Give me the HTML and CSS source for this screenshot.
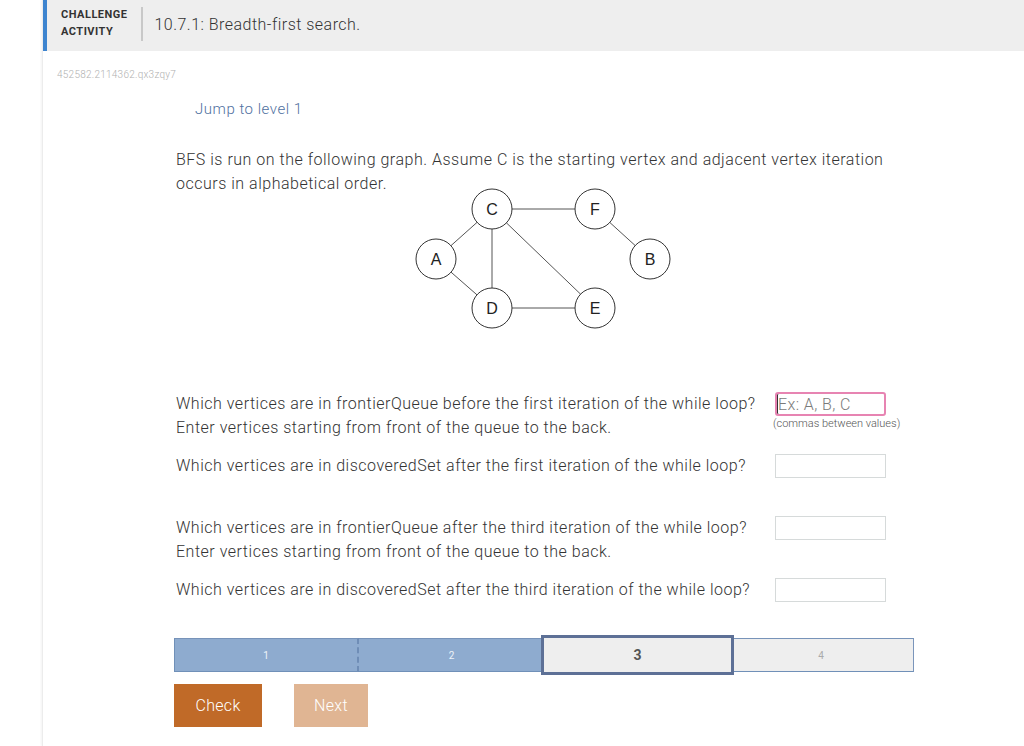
FILE: index.html
```html
<!DOCTYPE html>
<html>
<head>
<meta charset="utf-8">
<link rel="stylesheet" href="styles.css">
</head>
<body>
<div class="page">
  <div class="header">
    <div class="label">Challenge<br>Activity</div>
    <div class="divider"></div>
    <div class="title">10.7.1: Breadth-first search.</div>
  </div>
  <div class="id">452582.2114362.qx3zqy7</div>
  <div class="jump">Jump to level 1</div>
  <div class="content">
    <p class="prompt">BFS is run on the following graph. Assume C is the starting vertex and adjacent vertex iteration occurs in alphabetical order.</p>
    <svg class="graph" width="262" height="144" viewBox="0 0 262 144">
      <g stroke="#555" stroke-width="1">
        <line x1="82" y1="22" x2="185" y2="22"/>
        <line x1="82" y1="22" x2="26" y2="72"/>
        <line x1="82" y1="22" x2="82" y2="121"/>
        <line x1="82" y1="22" x2="185" y2="121"/>
        <line x1="26" y1="72" x2="82" y2="121"/>
        <line x1="185" y1="22" x2="240" y2="72"/>
        <line x1="82" y1="121" x2="185" y2="121"/>
      </g>
      <g fill="#fff" stroke="#333" stroke-width="1">
        <circle cx="82" cy="22" r="20"/>
        <circle cx="185" cy="22" r="20"/>
        <circle cx="26" cy="72" r="20"/>
        <circle cx="240" cy="72" r="20"/>
        <circle cx="82" cy="121" r="20"/>
        <circle cx="185" cy="121" r="20"/>
      </g>
      <g class="nodelabel" text-anchor="middle">
        <text x="82" y="28">C</text>
        <text x="185" y="28">F</text>
        <text x="26" y="78">A</text>
        <text x="240" y="78">B</text>
        <text x="82" y="127">D</text>
        <text x="185" y="127">E</text>
      </g>
    </svg>

    <div class="qrow q1">
      <div class="qtext">Which vertices are in frontierQueue before the first iteration of the while loop?<br>Enter vertices starting from front of the queue to the back.</div>
      <div class="qinput">
        <input class="field focused" type="text" placeholder="Ex: A, B, C">
        <div class="hint">(commas between values)</div>
      </div>
    </div>
    <div class="qrow q2">
      <div class="qtext">Which vertices are in discoveredSet after the first iteration of the while loop?</div>
      <div class="qinput"><input class="field" type="text"></div>
    </div>
    <div class="qrow q3">
      <div class="qtext">Which vertices are in frontierQueue after the third iteration of the while loop?<br>Enter vertices starting from front of the queue to the back.</div>
      <div class="qinput"><input class="field" type="text"></div>
    </div>
    <div class="qrow q4">
      <div class="qtext">Which vertices are in discoveredSet after the third iteration of the while loop?</div>
      <div class="qinput"><input class="field" type="text"></div>
    </div>

    <div class="progress">
      <div class="seg done first">1</div>
      <div class="seg done">2</div>
      <div class="seg current">3</div>
      <div class="seg todo">4</div>
    </div>

    <div class="buttons">
      <button class="btn check">Check</button>
      <button class="btn next">Next</button>
    </div>
  </div>
</div>
</body>
</html>
```

FILE: styles.css
```css
html, body {
  margin: 0;
  padding: 0;
  background: #fff;
}
body {
  font-family: Roboto, "Liberation Sans", sans-serif;
  font-weight: 300;
  letter-spacing: 0.032em;
  color: #333;
}
.page {
  margin-left: 42px;
  min-height: 746px;
  border-left: 1px solid #ececec;
  box-shadow: -1px 0 2px rgba(0,0,0,0.05);
}
.header {
  height: 51px;
  background: #eeeeee;
  border-left: 4px solid #3d84cf;
  display: flex;
  align-items: center;
}
.label {
  margin-left: 14px;
  margin-top: -5px;
  font-size: 11px;
  font-weight: 700;
  letter-spacing: 0.5px;
  line-height: 17px;
  text-transform: uppercase;
  color: #333;
}
.divider {
  width: 2px;
  height: 34px;
  background: #c8c8c8;
  margin-left: 13px;
  margin-top: -3px;
}
.title {
  margin-left: 12px;
  margin-top: -3px;
  font-size: 16px;
  font-weight: 300;
  letter-spacing: 0.03em;
  color: #333;
}
.id {
  margin: 18px 0 0 14px;
  font-size: 10px;
  line-height: 12px;
  letter-spacing: 0.025em;
  color: #b0b0b0;
}
.jump {
  margin: 18px 0 0 152px;
  font-size: 15px;
  font-weight: 300;
  letter-spacing: 0.035em;
  line-height: 20px;
  color: #4f70a0;
}
.content {
  margin-left: 131px;
  width: 740px;
}
.prompt {
  margin: 29px 0 0 2px;
  font-size: 16px;
  line-height: 24px;
  width: 720px;
}
.graph {
  display: block;
  margin: -9px 0 0 236px;
}
.nodelabel {
  font-family: "Liberation Sans", Arial, sans-serif;
  font-size: 16px;
  font-weight: 400;
  letter-spacing: 0;
  fill: #222;
}
.qrow {
  display: flex;
  font-size: 16px;
  line-height: 24px;
}
.q1 { margin-top: 61px; }
.q2 { margin-top: 14px; }
.q3 { margin-top: 38px; }
.q4 { margin-top: 14px; }
.qtext {
  width: 599px;
  padding-left: 2px;
}
.qinput {
  width: 111px;
}
.field {
  display: block;
  box-sizing: border-box;
  width: 111px;
  height: 24px;
  margin: 0;
  border: 1px solid #d6dada;
  border-radius: 0;
  background: #fff;
  font-family: Roboto, "Liberation Sans", sans-serif;
  font-weight: 300;
  font-size: 16px;
  letter-spacing: 0.025em;
  padding: 0 2px;
  outline: none;
}
.field.focused {
  border: 2px solid #e784b2;
  border-radius: 3px;
  padding-left: 1px;
  box-shadow: inset 1px 0 0 #333;
}
.field::placeholder {
  color: #7a7a7a;
}
.hint {
  margin-left: -2px;
  font-size: 11px;
  line-height: 14px;
  margin-top: 1px;
  letter-spacing: 0;
  color: #555;
  white-space: nowrap;
}
.progress {
  margin-top: 36px;
  display: grid;
  grid-template-columns: repeat(4, 1fr);
  height: 34px;
  letter-spacing: 0;
}
.seg {
  box-sizing: border-box;
  display: flex;
  align-items: center;
  justify-content: center;
  font-size: 10px;
  font-weight: 400;
  border-top: 1px solid #7793b9;
  border-bottom: 1px solid #7090b8;
}
.seg.done {
  background: #8eabcf;
  color: #eef3f9;
}
.seg.first {
  border-left: 1px solid #7090b8;
  border-right: 2px dashed #6f8db6;
}
.seg.current {
  background: #eeeeee;
  outline: 3px solid #5d7096;
  outline-offset: -1px;
  border: none;
  margin: -1px -3px -1px -1px;
  font-size: 14px;
  font-weight: 700;
  color: #555;
  position: relative;
  z-index: 1;
}
.seg.todo {
  background: #eeeeee;
  color: #aaa;
  border-right: 1px solid #7a95bb;
}
.buttons {
  margin-top: 12px;
  display: flex;
  gap: 32px;
}
.btn {
  height: 43px;
  border: none;
  border-radius: 0;
  color: #fff;
  font-family: Roboto, "Liberation Sans", sans-serif;
  font-weight: 300;
  letter-spacing: 0.02em;
  font-size: 16px;
  padding: 0;
}
.check {
  width: 88px;
  background: #c06a28;
}
.next {
  width: 74px;
  background: #e0b593;
}
```
